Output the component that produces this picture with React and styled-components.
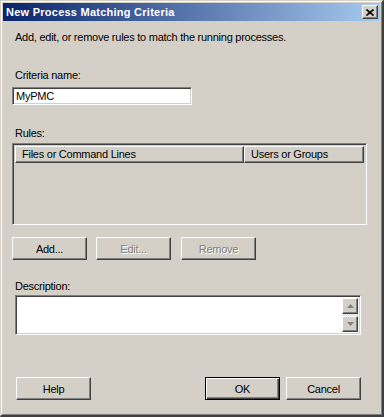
import React from 'react'
import styled, { createGlobalStyle, css } from 'styled-components'

/****************** GLOBAL ******************/

const GlobalStyle = createGlobalStyle`
  html, body {
    margin: 0;
    padding: 0;
    background: #d4d0c8;
  }
  body {
    font-family: "Liberation Sans", Arial, sans-serif;
    font-size: 11px;
    letter-spacing: -0.25px;
    color: #000;
  }
`

const face = '#d4d0c8'

const raised = css`
  border-top: 1px solid #fff;
  border-left: 1px solid #fff;
  border-right: 1px solid #404040;
  border-bottom: 1px solid #404040;
  box-shadow: inset -1px -1px #808080, inset 1px 1px ${face};
`

const sunken = css`
  border-top: 1px solid #808080;
  border-left: 1px solid #808080;
  border-right: 1px solid #fff;
  border-bottom: 1px solid #fff;
  box-shadow: inset 1px 1px #404040, inset -1px -1px ${face};
`

/****************** WINDOW FRAME ******************/

const Window = styled.div`
  width: 384px;
  height: 417px;
  box-sizing: border-box;
  background: ${face};
  border-top: 1px solid ${face};
  border-left: 1px solid ${face};
  border-right: 2px solid #404040;
  border-bottom: 2px solid #404040;
  box-shadow: inset 1px 1px #fff, inset -1px -1px #808080;
  padding: 2px;
  display: flex;
  flex-direction: column;
`

const TitleBar = styled.div`
  height: 18px;
  display: flex;
  align-items: center;
  justify-content: space-between;
  padding: 0 2px 0 3px;
  background: linear-gradient(to right, #0a246a, #a6caf0);
`

const TitleText = styled.span`
  color: #fff;
  font-weight: bold;
  font-size: 11px;
  letter-spacing: 0.25px;
`

const CloseButton = styled.div`
  width: 16px;
  height: 14px;
  box-sizing: border-box;
  background: ${face};
  ${raised};
  display: flex;
  align-items: center;
  justify-content: center;
`

const Body = styled.div`
  flex: 1;
  display: flex;
  flex-direction: column;
  padding: 0 0 0 9px;
`

/****************** CONTROLS ******************/

const Label = styled.div`
  line-height: 13px;
  padding-left: 3px;
  margin-top: ${p => p.$top}px;
`

const TextInput = styled.div`
  width: 180px;
  height: 18px;
  box-sizing: border-box;
  background: #fff;
  ${sunken};
  margin-top: 5px;
  padding: 2px 3px;
  line-height: 13px;
`

const ListView = styled.div`
  width: 355px;
  height: 82px;
  box-sizing: border-box;
  margin-top: 3px;
  ${sunken};
  padding: 2px;
  display: flex;
  align-items: flex-start;
`

const ColumnHeader = styled.div`
  width: ${p => p.$w}px;
  height: 17px;
  box-sizing: border-box;
  ${raised};
  padding: 1px 0 0 6px;
  line-height: 13px;
`

const ButtonRow = styled.div`
  display: flex;
  margin-top: ${p => p.$top}px;
  padding: 0 ${p => p.$right || 0}px 0 ${p => p.$pad || 0}px;
`

const Button = styled.div`
  width: 75px;
  height: 23px;
  box-sizing: border-box;
  display: flex;
  align-items: center;
  justify-content: center;
  margin-left: ${p => p.$ml || 0}px;
  ${p => p.$default
    ? css`
      border: 1px solid #000;
      box-shadow: inset 1px 1px #fff, inset -1px -1px #404040, inset -2px -2px #808080;
    `
    : raised};
  color: ${p => p.$disabled ? '#808080' : '#000'};
  text-shadow: ${p => p.$disabled ? '1px 1px #fff' : 'none'};
`

const Spacer = styled.div`
  flex: 1;
`

const TextArea = styled.div`
  width: 346px;
  height: 40px;
  box-sizing: border-box;
  margin: 2px 0 0 3px;
  background: #fff;
  ${sunken};
  padding: 2px;
  display: flex;
  justify-content: flex-end;
`

const ScrollBar = styled.div`
  width: 16px;
  display: flex;
  flex-direction: column;
  background-color: #fff;
  background-image: repeating-conic-gradient(${face} 0 25%, #fff 0 50%);
  background-size: 2px 2px;
`

const ScrollButton = styled.div`
  width: 16px;
  height: 16px;
  box-sizing: border-box;
  background: ${face};
  ${raised};
  display: flex;
  align-items: center;
  justify-content: center;
`

const Track = styled.div`
  flex: 1;
`

const Arrow = ({ down }) => (
  <svg width="7" height="4" viewBox="0 0 7 4">
    {down
      ? <polygon points="0,0 7,0 3.5,4" fill="#808080" />
      : <polygon points="3.5,0 7,4 0,4" fill="#808080" />}
  </svg>
)

const CloseIcon = () => (
  <svg width="8" height="7" viewBox="0 0 8 7">
    <path d="M0.5 0.5 L7.5 6.5 M7.5 0.5 L0.5 6.5" stroke="#000" strokeWidth="1.6" />
  </svg>
)

export default function App() {
  return (
    <>
      <GlobalStyle />
      <Window>
        <TitleBar>
          <TitleText>New Process Matching Criteria</TitleText>
          <CloseButton><CloseIcon /></CloseButton>
        </TitleBar>
        <Body>
          <Label $top={10}>Add, edit, or remove rules to match the running processes.</Label>
          <Label $top={25}>Criteria name:</Label>
          <TextInput>MyPMC</TextInput>
          <Label $top={22}>Rules:</Label>
          <ListView>
            <ColumnHeader $w={229}>Files or Command Lines</ColumnHeader>
            <ColumnHeader $w={120}>Users or Groups</ColumnHeader>
          </ListView>
          <ButtonRow $top={12}>
            <Button>Add...</Button>
            <Button $ml={9} $disabled>Edit...</Button>
            <Button $ml={10} $disabled>Remove</Button>
          </ButtonRow>
          <Label $top={20}>Description:</Label>
          <TextArea>
            <ScrollBar>
              <ScrollButton><Arrow /></ScrollButton>
              <Track />
              <ScrollButton><Arrow down /></ScrollButton>
            </ScrollBar>
          </TextArea>
          <ButtonRow $top={42} $pad={4} $right={19}>
            <Button>Help</Button>
            <Spacer />
            <Button $default>OK</Button>
            <Button $ml={6}>Cancel</Button>
          </ButtonRow>
        </Body>
      </Window>
    </>
  )
}
